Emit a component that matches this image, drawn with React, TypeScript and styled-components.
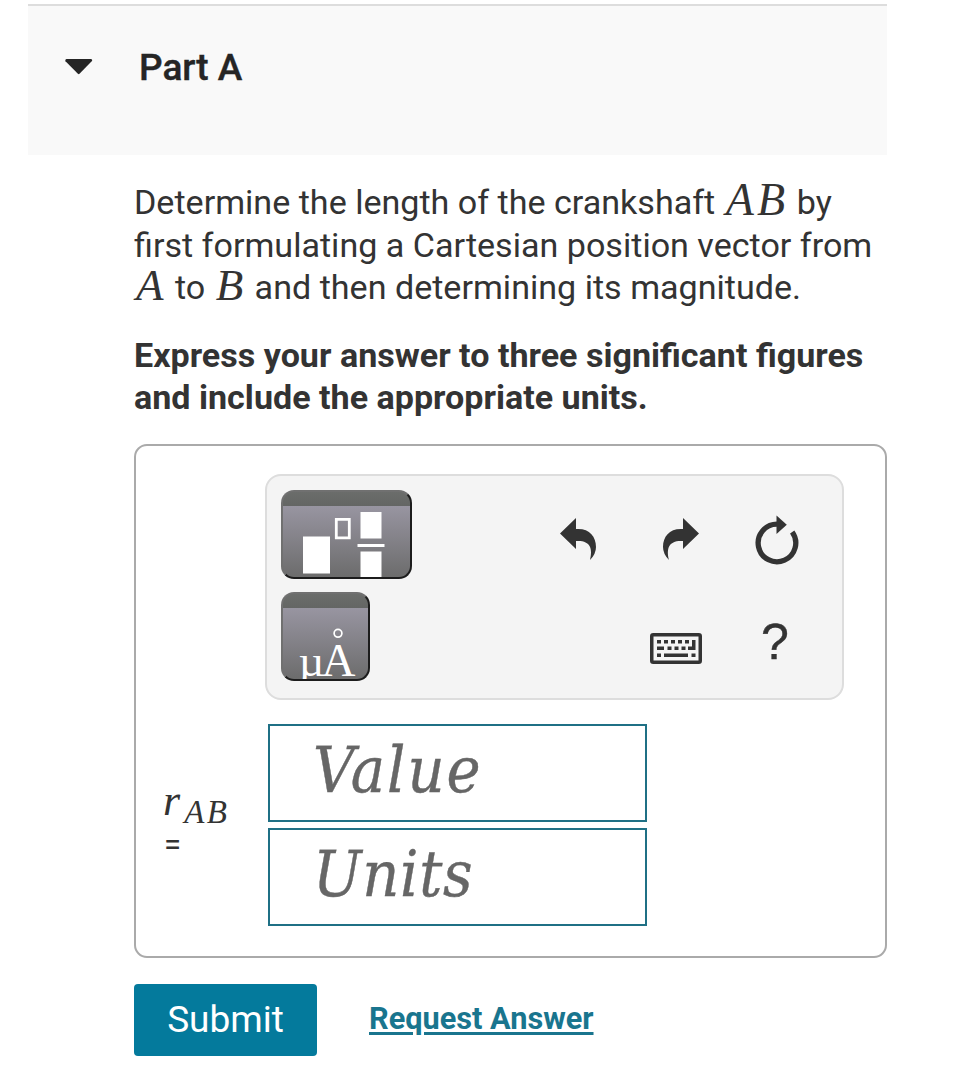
import React from "react";
import styled, { createGlobalStyle } from "styled-components";

const GlobalStyle = createGlobalStyle`
  * { box-sizing: border-box; }
  body { margin: 0; background: #fff; color: #333; font-family: Roboto, sans-serif; }
  p, h2 { margin: 0; }
`;

const Page = styled.main`
  width: 972px;
  height: 1067px;
  padding: 4px 85px 0 28px;
  overflow: hidden;
`;

const PartHeader = styled.header`
  display: flex;
  align-items: flex-start;
  height: 151px;
  padding: 40px 0 0 37px;
  background: #f9f9f9;
  border-top: 2px solid #ddd;
`;

const Caret = styled.svg`
  width: 28px;
  height: 16px;
  margin-top: 13px;
`;

const PartTitle = styled.h2`
  margin-left: 46px;
  font-size: 37px;
  line-height: 43px;
  font-weight: 500;
  color: #252525;
  -webkit-text-stroke: 0.4px #252525;
`;

const Content = styled.section`
  padding: 26px 0 0 106px;
`;

const Question = styled.p`
  font-size: 34.1px;
  line-height: 42.5px;
`;

const Line = styled.span`
  display: block;
  height: 42.5px;
  white-space: nowrap;
`;

const MathText = styled.i<{ $size?: number; $spacing?: number }>`
  position: relative;
  top: 1px;
  margin-left: 2px;
  font-family: "Liberation Serif", serif;
  font-size: ${(p) => p.$size ?? 45}px;
  line-height: 20px;
  letter-spacing: ${(p) => p.$spacing ?? 3}px;
`;

const Instruction = styled(Question)`
  margin-top: 25px;
  font-weight: 700;
`;

const AnswerBox = styled.div`
  height: 514px;
  margin-top: 25px;
  padding: 28px 41px 0 28px;
  border: 2px solid #aaa;
  border-radius: 13px;
`;

const Toolbar = styled.div`
  display: flex;
  justify-content: space-between;
  height: 226px;
  margin-left: 101px;
  padding: 14px 42px 0 14px;
  background: #f4f4f4;
  border: 2px solid #ddd;
  border-radius: 16px;
`;

const ButtonColumn = styled.div`
  display: flex;
  flex-direction: column;
  gap: 13px;
`;

const PaletteButton = styled.button<{ $width: number }>`
  width: ${(p) => p.$width}px;
  height: 89px;
  padding: 0;
  overflow: hidden;
  border: 2px solid;
  border-color: #707070 #1c1c1c #1c1c1c #707070;
  border-radius: 13px;
  background: linear-gradient(#6b6d6b 0, #646664 14px, #9895a1 14px, #6c6c6c 100%);
`;

const ButtonGlyph = styled.svg`
  display: block;
  width: 100%;
  height: 85px;
  fill: #fff;
  font-family: "Liberation Serif", serif;
  font-size: 47px;
`;

const Actions = styled.div`
  display: flex;
  flex-direction: column;
  width: 242px;
`;

const ActionRow = styled.div`
  display: flex;
  align-items: flex-start;
  height: 103px;
  justify-content: flex-end;
`;

const ActionIcon = styled.svg<{ $top: number; $right: number }>`
  flex: none;
  margin: ${(p) => p.$top}px ${(p) => p.$right}px 0 0;
  fill: #333;
`;

const Help = styled.span`
  width: 25px;
  margin: 19px 14px 0 0;
  font-family: "Liberation Sans", sans-serif;
  font-size: 50px;
  line-height: 60px;
  -webkit-text-stroke: 0.4px #333;
`;

const AnswerRow = styled.div`
  display: flex;
  margin-top: 24px;
`;

const AnswerLabel = styled.div`
  width: 104px;
  padding-top: 61px;
  white-space: nowrap;
`;

const Variable = styled.div`
  display: flex;
  align-items: flex-start;
  height: 44px;
`;

const Symbol = styled(MathText)`
  margin: -5px 0 0 -1px;
  line-height: 40px;
`;

const Subscript = styled(MathText)`
  margin: 11px 0 0 2px;
  line-height: 30px;
`;

const Equals = styled.div`
  font-size: 31px;
  line-height: 32px;
`;

const Fields = styled.div`
  display: flex;
  flex-direction: column;
  gap: 6px;
`;

const Field = styled.div<{ $spacing: number }>`
  width: 379px;
  height: 98px;
  padding-left: 43px;
  border: 2px solid #1f7085;
  font: italic 64px/88px "DejaVu Serif Condensed", "DejaVu Serif", serif;
  font-stretch: condensed;
  letter-spacing: ${(p) => p.$spacing}px;
  color: #666;
  -webkit-text-stroke: 0.4px #666;
`;

const Footer = styled.footer`
  display: flex;
  align-items: flex-start;
  gap: 52px;
  margin-top: 26px;
`;

const Submit = styled.button`
  width: 183px;
  height: 72px;
  padding: 0;
  border: 0;
  border-radius: 4px;
  background: #047a9c;
  color: #fff;
  font: 400 37px/72px Roboto, sans-serif;
`;

const RequestLink = styled.a`
  font-size: 30.7px;
  font-weight: 700;
  line-height: 70px;
  color: #19758e;
  text-decoration: underline;
  text-decoration-thickness: 3px;
  text-underline-offset: 3px;
`;

const Arrow = "M0 17.5 16 2v11C29 12 36 20 36 31q0 7-6 13c3-12 0-20-14-19v8Z";

export default function App() {
  return (
    <Page>
      <GlobalStyle />
      <PartHeader>
        <Caret viewBox="0 0 28 16">
          <path d="M1.5 0h24.5q2 .8.7 2.2L14.5 14.8q-.8.7-1.6 0L.5 2.2Q-.2.5 1.5 0Z" fill="#252525" />
        </Caret>
        <PartTitle>Part A</PartTitle>
      </PartHeader>
      <Content>
        <Question>
          <Line>Determine the length of the crankshaft <MathText $size={46} $spacing={3.2}>AB</MathText> by</Line>
          <Line>first formulating a Cartesian position vector from</Line>
          <Line><MathText>A</MathText> to <MathText>B</MathText> and then determining its magnitude.</Line>
        </Question>
        <Instruction>
          <Line>Express your answer to three significant figures</Line>
          <Line>and include the appropriate units.</Line>
        </Instruction>
        <AnswerBox>
          <Toolbar>
            <ButtonColumn>
              <PaletteButton $width={131} aria-label="Templates">
                <ButtonGlyph viewBox="0 0 127 85">
                  <path d="M20 44.5h27v37H20ZM77.5 20h21v26.500h-21ZM74.500 52h27v3h-27ZM77.500 59.500h21v28h-21Z" />
                  <path d="M53.300 27.300h13v18.500h-13Z" fill="none" stroke="#fff" strokeWidth="2.800" />
                </ButtonGlyph>
              </PaletteButton>
              <PaletteButton $width={89} aria-label="Symbols">
                <ButtonGlyph viewBox="0 0 85 85">
                  <text x="15.5" y="82" fontSize="45">µ</text>
                  <text x="38.5" y="82">A</text>
                  <circle cx="55" cy="39.3" r="3.9" fill="none" stroke="#fff" strokeWidth="1.7" />
                </ButtonGlyph>
              </PaletteButton>
            </ButtonColumn>
            <Actions>
              <ActionRow>
                <ActionIcon $top={26} $right={67} width="36" height="46" viewBox="0 0 36 46"><path d={Arrow} /></ActionIcon>
                <ActionIcon $top={26} $right={56} width="36" height="46" viewBox="0 0 36 46"><path d={Arrow} transform="matrix(-1 0 0 1 36 0)" /></ActionIcon>
                <ActionIcon $top={25} $right={1} width="44" height="50" viewBox="0 0 44 50">
                  <path d="M22 9.200A18.800 18.800 0 1 0 37.200 17" fill="none" stroke="#333" strokeWidth="5.300" />
                  <path d="M21.500 .5 31.800 9.700 21.500 19Z" />
                </ActionIcon>
              </ActionRow>
              <ActionRow>
                <ActionIcon $top={40} $right={59} width="52" height="31" viewBox="0 0 52 31">
                  <rect x="1.750" y="1.750" width="48.500" height="27.500" rx="1.500" fill="none" stroke="#333" strokeWidth="3.500" />
                  <path d="M7 7h4v3.500H7ZM14 7h4v3.500h-4ZM21 7h4v3.500h-4ZM28 7h4v3.500h-4ZM35 7h4v3.500h-4ZM42 7h3.500v10H38v-3.500h4ZM7 13.500h7V17H7ZM17.500 13.500h4V17h-4ZM24.500 13.500h4V17h-4ZM31.500 13.500h4V17h-4ZM7 20.500h4V24H7ZM14 20.500h24V24H14ZM41.500 20.500h4V24h-4Z" />
                </ActionIcon>
                <Help>?</Help>
              </ActionRow>
            </Actions>
          </Toolbar>
          <AnswerRow>
            <AnswerLabel>
              <Variable>
                <Symbol $size={44} $spacing={2}>r</Symbol>
                <Subscript $size={33} $spacing={2.5}>AB</Subscript>
              </Variable>
              <Equals>=</Equals>
            </AnswerLabel>
            <Fields>
              <Field $spacing={2}>Value</Field>
              <Field $spacing={0.7}>Units</Field>
            </Fields>
          </AnswerRow>
        </AnswerBox>
        <Footer>
          <Submit>Submit</Submit>
          <RequestLink>Request Answer</RequestLink>
        </Footer>
      </Content>
    </Page>
  );
}
